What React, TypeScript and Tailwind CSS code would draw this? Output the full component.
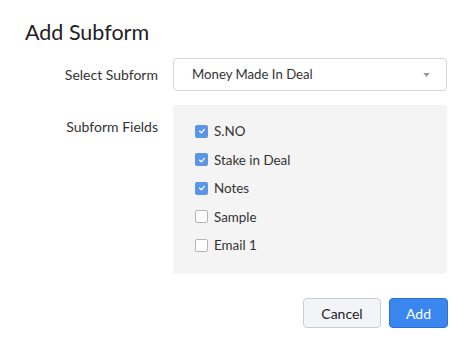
const fields = [
  { label: "S.NO", checked: true },
  { label: "Stake in Deal", checked: true },
  { label: "Notes", checked: true },
  { label: "Sample", checked: false },
  { label: "Email 1", checked: false },
];

function CheckBox({ checked }: { checked: boolean }) {
  if (checked) {
    return (
      <span className="flex h-[13px] w-[13px] items-center justify-center rounded-[2px] bg-[#5a95e6]">
        <svg viewBox="0 0 10 10" className="h-[8px] w-[8px]">
          <path d="M2 5.2 L4.2 7.2 L8 3" fill="none" stroke="white" strokeWidth="1.6" strokeLinecap="round" strokeLinejoin="round" />
        </svg>
      </span>
    );
  }
  return <span className="h-[13px] w-[13px] rounded-[2px] border border-[#b5b5b5] bg-white" />;
}

export default function App() {
  return (
    <div className="h-[353px] w-[474px] bg-white text-[#333] font-['Lato','Open_Sans',sans-serif]">
      <h1 className="pl-[25px] pt-[19px] text-[21.5px] leading-[26px] text-[#222]">Add Subform</h1>

      <div className="mt-[13px] flex items-center">
        <div className="w-[173px] pr-[15px] text-right text-[14px]">Select Subform</div>
        <div className="flex h-[33px] w-[274px] items-center justify-between rounded-[4px] border border-[#d6d6d6] pl-[18px] pr-[16px] text-[13.2px] text-[#333]">
          <span>Money Made In Deal</span>
          <svg viewBox="0 0 8 5" className="h-[4px] w-[7px]">
            <path d="M0 0 L8 0 L4 5 Z" fill="#9a9a9a" />
          </svg>
        </div>
      </div>

      <div className="mt-[14px] flex">
        <div className="w-[173px] pr-[15px] pt-[11px] text-right text-[14px]">Subform Fields</div>
        <div className="h-[169px] w-[274px] rounded-[3px] bg-[#f4f4f4] pl-[22px] pt-[12px]">
          {fields.map((f) => (
            <div key={f.label} className="flex h-[28.5px] items-center gap-[6px] text-[13.4px]">
              <CheckBox checked={f.checked} />
              <span>{f.label}</span>
            </div>
          ))}
        </div>
      </div>

      <div className="mt-[24px] flex justify-end gap-[8px] pr-[26px]">
        <button className="h-[30px] w-[78px] rounded-[4px] border border-[#c9ccd1] bg-[#f3f4f6] text-[14px] text-[#222]">
          Cancel
        </button>
        <button className="h-[30px] w-[59px] rounded-[4px] border border-[#2a6fd6] bg-[#3b86ee] text-[14px] text-white">
          Add
        </button>
      </div>
    </div>
  );
}
